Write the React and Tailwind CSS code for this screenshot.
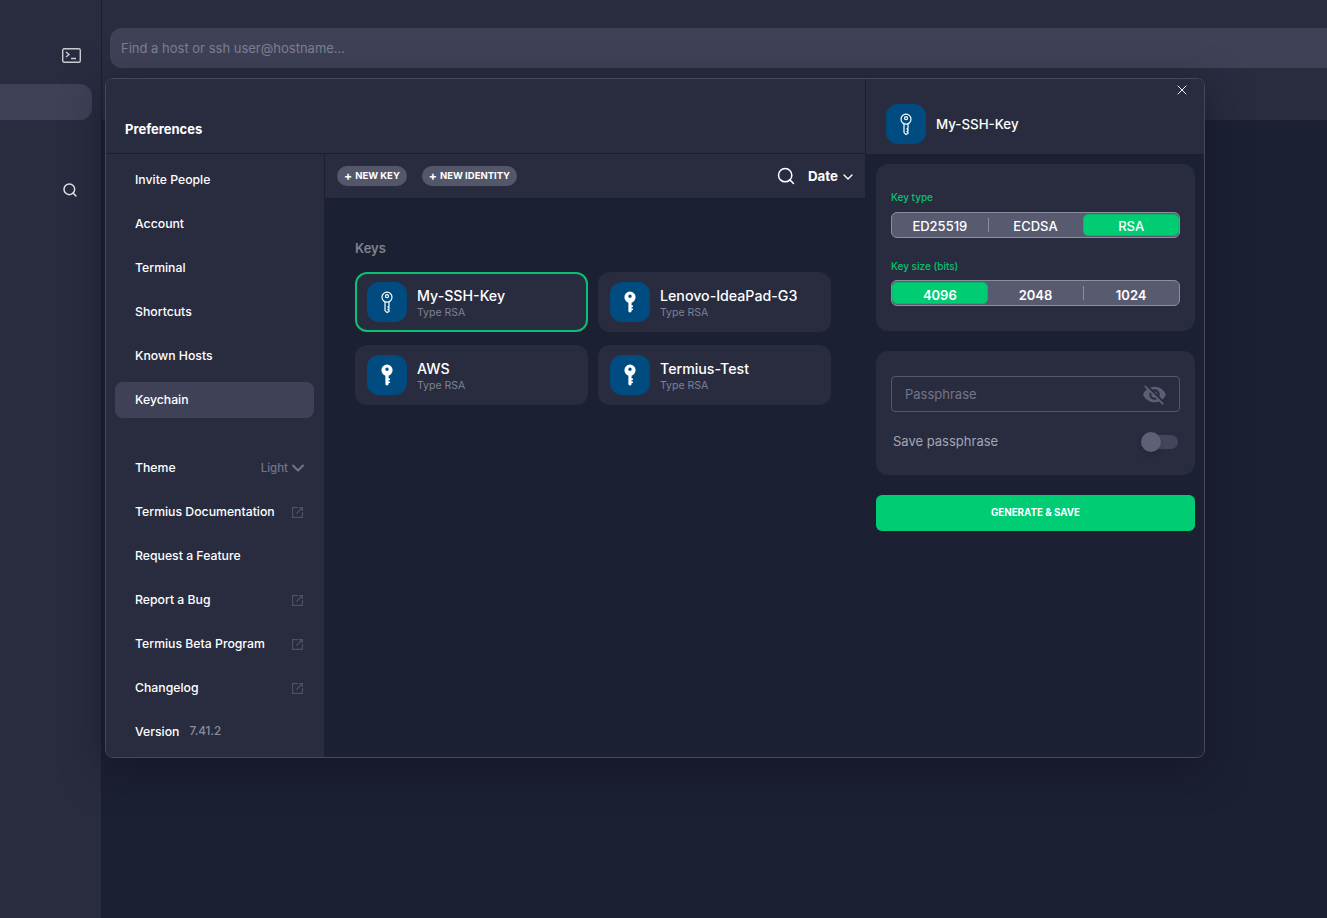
import React from 'react';
import { ChevronDown, Search, X } from 'lucide-react';
import { MdVisibilityOff } from 'react-icons/md';

const font = 'font-["Inter","Noto_Sans",sans-serif]';

const KeyOutline = () => (
    <svg width="14" height="23" viewBox="0 0 14 23" fill="none" stroke="white" strokeWidth="1.2">
        <circle cx="7" cy="6.2" r="5" />
        <circle cx="7" cy="5.2" r="1.5" />
        <path d="M5 10.8V19.6L7 21.6L9 20.4V19.2L8 18.6L9 17.8V16.6L8 16L9 15.2V10.8" />
    </svg>
);

const KeySolid = () => (
    <svg width="14" height="23" viewBox="0 0 14 23" fill="white">
        <path fillRule="evenodd" d="M7 .6a5.6 5.6 0 1 1 0 11.2A5.6 5.6 0 0 1 7 .6ZM7 3.6a1.7 1.7 0 1 0 0 3.4 1.7 1.7 0 0 0 0-3.4Z" />
        <path d="M5.4 11H8.6V14.6H10V16H8.6V17.6H10V19H8.6V20.6L7 21.8L5.4 20.6Z" />
    </svg>
);

const ExternalIcon = () => (
    <svg width="11" height="11" viewBox="0 0 11 11" fill="none" stroke="#4f5266" strokeWidth="1.1">
        <path d="M6 .6H.6V10.4H10.4V5" />
        <path d="M4.5 6.5L10 1M7 .6H10.4V4" />
    </svg>
);

const TerminalIcon = () => (
    <svg width="19" height="15" viewBox="0 0 19 15" fill="none" stroke="#c9cad2" strokeWidth="1.4">
        <rect x=".7" y=".7" width="17.6" height="13.6" rx="1.5" />
        <path d="M4 4L7 6.5L4 9M9 10.5H14" />
    </svg>
);

const KeyBadge = ({ outline }) => (
    <div className="w-10 h-10 rounded-xl bg-[#004c80] flex items-center justify-center shrink-0">
        {outline ? <KeyOutline /> : <KeySolid />}
    </div>
);

const NavItem = ({ label, external, active, children }) => (
    <div className={`h-9 mb-2 pl-5 pr-[11px] rounded-lg flex items-center justify-between text-[12.25px] font-medium text-white ${active ? 'bg-[#3f4257]' : ''}`}>
        <span>{label}</span>
        {external && <ExternalIcon />}
        {children}
    </div>
);

const KeyCard = ({ name, selected }) => (
    <div className={`h-[60px] rounded-xl bg-[#292c3f] flex items-center gap-2.5 ${selected ? 'border-2 border-[#0bc073] px-2.5' : 'px-3'}`}>
        <KeyBadge outline={selected} />
        <div className="min-w-0 pt-0.5">
            <div className="text-[14.2px] leading-[19px] font-medium text-white">{name}</div>
            <div className="mt-px text-[10.5px] leading-[14px] text-[#7f8194]">Type RSA</div>
        </div>
    </div>
);

const Pill = ({ label }) => (
    <button className="h-5 px-[7px] rounded-full bg-[#54566a] text-white text-[9.5px] font-bold flex items-center gap-[3px]">
        <span className="text-[12px] leading-none">+</span>
        {label}
    </button>
);

const Segmented = ({ options, active, dividerAfter, bold }) => (
    <div className="h-[26px] rounded-md border border-[#8c8e9f] bg-[#585b70] grid grid-cols-3 grid-rows-1 items-stretch py-px">
        {options.map((opt, i) => (
            <div
                key={opt}
                className={`relative min-h-0 flex items-center justify-center text-[13px] leading-4 text-white ${bold ? 'font-semibold pt-1' : 'font-medium pt-0.5'} ${i === active ? 'bg-[#00cc74] rounded-[5px] border border-[#0bb56a]' : ''}`}
            >
                {opt}
                {i === dividerAfter && <span className="absolute -right-px top-1 bottom-1 w-px bg-[#8c8e9f]" />}
            </div>
        ))}
    </div>
);

export default function App() {
    return (
        <div className={`${font} relative h-[918px] w-full overflow-hidden bg-[#1c2033] flex`}>
            {/* app behind the dialog */}
            <aside className="w-[102px] shrink-0 bg-[#292c3f] border-r border-[#1c1f30] pt-[84px] pr-[9px]">
                <div className="h-9 rounded-r-xl bg-[#3f4257]" />
            </aside>
            <div className="absolute left-[62px] top-[48px]"><TerminalIcon /></div>
            <Search className="absolute left-[62px] top-[182px] text-[#e4e5ea]" size={16} strokeWidth={2.2} />
            <main className="flex-1 min-w-0">
                <div className="h-[121px] bg-[#292c3f] border-b border-[#1c1f30] pt-7 pl-2">
                    <div className="h-10 rounded-l-xl bg-[#3f4257] flex items-center px-[11px] pt-0.5 text-[13px] text-[#7d7f93]">
                        Find a host or ssh user@hostname...
                    </div>
                </div>
            </main>

            {/* preferences dialog */}
            <div className="absolute left-[105px] top-[78px] w-[1100px] h-[680px] rounded-lg border border-[#45475a] bg-[#1c2033] overflow-hidden flex shadow-[0_10px_40px_rgba(15,17,30,0.55)]">
                <div className="w-[759px] shrink-0 flex flex-col">
                    <div className="h-[75px] shrink-0 bg-[#292c3f] border-b border-[#1c1f30] pl-[19px] flex items-end pb-3.5">
                        <h1 className="text-[13px] font-bold text-white">Preferences</h1>
                    </div>
                    <div className="flex-1 flex min-h-0">
                        <nav className="w-[219px] shrink-0 bg-[#292c3f] border-r border-[#1c1f30] pt-2 pl-[9px] pr-[10px]">
                            <NavItem label="Invite People" />
                            <NavItem label="Account" />
                            <NavItem label="Terminal" />
                            <NavItem label="Shortcuts" />
                            <NavItem label="Known Hosts" />
                            <NavItem label="Keychain" active />
                            <div className="h-6" />
                            <NavItem label="Theme">
                                <span className="flex items-center -mr-[5px] text-[11.5px] text-[#72748a] font-medium">
                                    <span className="pt-0.5">Light</span> <ChevronDown size={20} strokeWidth={2.4} />
                                </span>
                            </NavItem>
                            <NavItem label="Termius Documentation" external />
                            <NavItem label="Request a Feature" />
                            <NavItem label="Report a Bug" external />
                            <NavItem label="Termius Beta Program" external />
                            <NavItem label="Changelog" external />
                            <div className="h-9 pl-5 flex items-center gap-2.5 text-[12.25px] font-medium text-white">
                                Version <span className="text-[11.75px] text-[#8a8c9d]">7.41.2</span>
                            </div>
                        </nav>
                        <section className="flex-1 min-w-0 flex flex-col">
                            <div className="h-[45px] shrink-0 bg-[#292c3f] border-b border-[#1c1f30] pl-3 pr-[9px] flex items-center gap-[15px]">
                                <Pill label="NEW KEY" />
                                <Pill label="NEW IDENTITY" />
                                <Search className="ml-auto -mr-[3px] text-white" size={20} strokeWidth={1.8} />
                                <span className="flex items-center gap-0.5 pt-px text-[13.3px] font-bold text-white">
                                    Date <ChevronDown size={16} strokeWidth={2} />
                                </span>
                            </div>
                            <div className="pt-[39px] pl-[30px] pr-[34px]">
                                <h2 className="text-[13px] leading-5 font-semibold text-[#80828f] mb-3.5">Keys</h2>
                                <div className="grid grid-cols-2 gap-x-2.5 gap-y-[13px]">
                                    <KeyCard name="My-SSH-Key" selected />
                                    <KeyCard name="Lenovo-IdeaPad-G3" />
                                    <KeyCard name="AWS" />
                                    <KeyCard name="Termius-Test" />
                                </div>
                            </div>
                        </section>
                    </div>
                </div>

                <aside className="flex-1 min-w-0 border-l border-[#1c1f30] flex flex-col">
                    <div className="relative h-[76px] shrink-0 bg-[#292c3f] border-b border-[#1c1f30] pl-5 pt-[25px] flex items-start gap-2.5">
                        <KeyBadge outline />
                        <span className="mt-[10px] text-[13.3px] leading-5 font-medium text-white">My-SSH-Key</span>
                        <X className="absolute right-[14px] top-[3px] text-white" size={16} strokeWidth={1.4} />
                    </div>
                    <div className="pl-2.5 pr-[9px] pt-[9px] flex flex-col gap-5">
                        <div className="rounded-xl bg-[#292c3f] px-[15px] pt-[27px] pb-[25px]">
                            <div className="text-[10px] leading-[13px] mb-2 text-[#0bc073] font-medium">Key type</div>
                            <Segmented options={['ED25519', 'ECDSA', 'RSA']} active={2} dividerAfter={0} />
                            <div className="text-[10px] leading-[13px] mt-[22px] mb-[7px] text-[#0bc073] font-medium">Key size (bits)</div>
                            <Segmented options={['4096', '2048', '1024']} active={0} dividerAfter={1} bold />
                        </div>
                        <div className="rounded-xl bg-[#292c3f] px-[15px] pt-[25px] h-[124px]">
                            <div className="h-9 rounded border border-[#54566a] pl-[13px] pr-3 flex items-center justify-between text-[13px] text-[#737589]">
                                <span className="pt-0.5">Passphrase</span>
                                <MdVisibilityOff className="text-[#5c5e73]" size={25} />
                            </div>
                            <div className="mt-3 h-9 px-0.5 flex items-center justify-between text-[13px] text-[#a3a5b3]">
                                Save passphrase
                                <div className="relative w-[35px] h-[14px] rounded-full bg-[#43465b]">
                                    <div className="absolute -left-0.5 -top-[3px] w-5 h-5 rounded-full bg-[#5e6075] shadow-md" />
                                </div>
                            </div>
                        </div>
                        <button className="h-9 rounded-md bg-[#00cc74] text-white text-[9.75px] font-bold">GENERATE &amp; SAVE</button>
                    </div>
                </aside>
            </div>
        </div>
    );
}
